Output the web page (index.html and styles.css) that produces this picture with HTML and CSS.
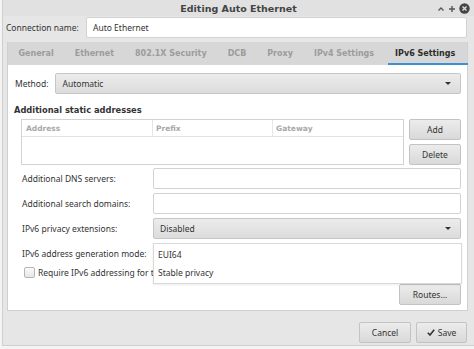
FILE: index.html
```html
<!DOCTYPE html>
<html lang="en">
<head>
    <meta charset="UTF-8">
    <meta name="viewport" content="width=device-width, initial-scale=1.0">
    <title>Editing Auto Ethernet</title>
    <link rel="stylesheet" href="styles.css">
</head>
<body>
<div class="window">
  <div class="titlebar">
    <span class="title">Editing Auto Ethernet</span>
    <div class="wm-buttons">
      <svg width="8" height="8" viewBox="0 0 8 8"><path d="M1.5 5.5 L4 3 L6.5 5.5" fill="none" stroke="#555" stroke-width="1.3"/></svg>
      <svg width="8" height="8" viewBox="0 0 8 8"><path d="M4 1 V7 M1 4 H7" stroke="#555" stroke-width="1.4"/></svg>
      <svg width="11" height="11" viewBox="0 0 11 11"><circle cx="5.5" cy="5.5" r="5.2" fill="#444"/><path d="M3.5 3.5 L7.5 7.5 M7.5 3.5 L3.5 7.5" stroke="#ddd" stroke-width="1.4"/></svg>
    </div>
  </div>

  <div class="conn-row">
    <label class="conn-label">Connection name:</label>
    <div class="entry conn-entry">Auto Ethernet</div>
  </div>

  <div class="notebook">
    <ul class="tabs">
      <li>General</li>
      <li>Ethernet</li>
      <li>802.1X Security</li>
      <li>DCB</li>
      <li>Proxy</li>
      <li>IPv4 Settings</li>
      <li class="active">IPv6 Settings</li>
    </ul>

    <div class="page">
      <div class="method-row">
        <span class="label">Method:</span>
        <div class="combo method-combo">Automatic<span class="arrow"></span></div>
      </div>

      <h3 class="section">Additional static addresses</h3>

      <div class="addr-row">
        <div class="addr-table">
          <div class="addr-head">
            <span>Address</span>
            <span>Prefix</span>
            <span>Gateway</span>
          </div>
        </div>
        <div class="addr-buttons">
          <button class="btn">Add</button>
          <button class="btn">Delete</button>
        </div>
      </div>

      <div class="form">
        <span class="label">Additional DNS servers:</span>
        <div class="entry"></div>
        <span class="label">Additional search domains:</span>
        <div class="entry"></div>
        <span class="label">IPv6 privacy extensions:</span>
        <div class="combo">Disabled<span class="arrow"></span></div>
        <span class="label">IPv6 address generation mode:</span>
        <div class="combo-wrap">
          <div class="combo">EUI64<span class="arrow"></span></div>
          <ul class="popup">
            <li>EUI64</li>
            <li>Stable privacy</li>
          </ul>
        </div>
      </div>

      <label class="check-row">
        <span class="checkbox"></span>
        <span class="check-text">Require IPv6 addressing for this connection to complete</span>
      </label>

      <div class="routes-row">
        <button class="btn routes">Routes…</button>
      </div>
    </div>
  </div>

  <div class="footer">
    <button class="btn">Cancel</button>
    <button class="btn save"><svg width="8" height="7" viewBox="0 0 8 7"><path d="M0.8 3.8 L3 6 L7.2 0.8" fill="none" stroke="#333" stroke-width="1.6"/></svg>Save</button>
  </div>
</div>
</body>
</html>
```

FILE: styles.css
```css
:root {
    --clr-window: #e6e6e6;
    --clr-tabs: #d7d7d7;
    --clr-border: #c9c9c9;
    --clr-text: #333;
    --clr-accent: #3d8fd1;
}

* {
    box-sizing: border-box;
}

body {
    margin: 0;
    font-family: "Noto Sans", sans-serif;
    font-size: 8.5px;
    color: var(--clr-text);
    background: #f4f4f4;
}

.window {
    width: 472px;
    height: 346px;
    margin-left: 2px;
    background: var(--clr-window);
    border-left: 1px solid #cfcfcf;
    border-bottom: 1px solid #cfcfcf;
    display: flex;
    flex-direction: column;
}

.label {
    white-space: nowrap;
}

/* title bar */

.titlebar {
    position: relative;
    height: 16px;
    display: flex;
    align-items: center;
    justify-content: center;
    background: #e1e1e1;
}

.title {
    font-family: "DejaVu Sans", sans-serif;
    font-weight: bold;
    font-size: 9.5px;
    color: #444;
}

.wm-buttons {
    position: absolute;
    right: 4px;
    top: 3px;
    display: flex;
    align-items: center;
    gap: 3px;
}

/* connection name */

.conn-row {
    display: flex;
    align-items: center;
    gap: 6px;
    padding: 1px 7px 0 3px;
    height: 22px;
}

.conn-label {
    width: 74px;
    flex-shrink: 0;
    white-space: nowrap;
}

.entry {
    height: 21px;
    background: #fff;
    border: 1px solid #d2d2d2;
    border-radius: 2px;
    padding: 0 6px;
    display: flex;
    align-items: center;
}

.conn-entry {
    flex: 1;
}

/* notebook */

.notebook {
    margin: 4px 6px 0 4px;
    border: 1px solid #d0d0d0;
    border-top: none;
}

.tabs {
    margin: 0;
    padding: 0;
    list-style: none;
    display: flex;
    background: var(--clr-tabs);
    height: 23px;
}

.tabs li {
    position: relative;
    flex-shrink: 0;
    white-space: nowrap;
    font-family: "DejaVu Sans", sans-serif;
    font-weight: bold;
    font-size: 8px;
    color: #9c9c9c;
    padding: 0 10.5px;
    display: flex;
    align-items: center;
}

.tabs li.active {
    color: #2d2d2d;
}

.tabs li.active::after {
    content: "";
    position: absolute;
    left: 3px;
    right: -2px;
    bottom: 0;
    height: 2px;
    background: var(--clr-accent);
}

.page {
    background: #fff;
    height: 245px;
    padding: 8px 6px 0 7px;
    display: flex;
    flex-direction: column;
}

.method-row {
    display: flex;
    align-items: center;
    gap: 7px;
}

.combo {
    position: relative;
    height: 21px;
    border: 1px solid #c6c6c6;
    border-radius: 2px;
    background: linear-gradient(#ececec, #dcdcdc);
    display: flex;
    align-items: center;
    padding: 0 6px;
}

.method-combo {
    flex: 1;
}

.arrow {
    position: absolute;
    right: 9px;
    top: 8px;
    border-left: 3px solid transparent;
    border-right: 3px solid transparent;
    border-top: 3.5px solid #333;
}

.section {
    margin: 11px 0 4px -1px;
    font-family: "DejaVu Sans", sans-serif;
    font-size: 8.3px;
    font-weight: bold;
}

.addr-row {
    display: flex;
    gap: 5px;
    padding-left: 6px;
}

.addr-table {
    flex: 1;
    height: 46px;
    border: 1px solid #d2d2d2;
}

.addr-head {
    display: grid;
    grid-template-columns: 130px 120px 1fr;
    height: 17px;
    border-bottom: 1px solid #e2e2e2;
}

.addr-head span {
    font-family: "DejaVu Sans", sans-serif;
    font-weight: bold;
    font-size: 7.5px;
    color: #a8a8a8;
    padding-left: 3px;
    display: flex;
    align-items: center;
    border-left: 1px solid #e6e6e6;
}

.addr-head span:first-child {
    border-left: none;
    padding-left: 4px;
}

.addr-buttons {
    display: flex;
    flex-direction: column;
    gap: 4px;
}

.btn {
    font: inherit;
    color: var(--clr-text);
    height: 21px;
    width: 52px;
    border: 1px solid #c3c3c3;
    border-radius: 2px;
    background: linear-gradient(#ececec, #d9d9d9);
    padding: 0;
    display: flex;
    align-items: center;
    justify-content: center;
    gap: 3px;
}

.form {
    display: grid;
    grid-template-columns: 131px 1fr;
    row-gap: 4px;
    align-items: center;
    margin-top: 3px;
    padding-left: 7px;
}

.combo-wrap {
    position: relative;
}

.popup {
    position: absolute;
    left: 0;
    right: -1px;
    top: 0;
    margin: 0;
    padding: 1px 0 2px;
    list-style: none;
    background: #fff;
    border: 1px solid #d8d8d8;
    box-shadow: 0 1px 2px rgba(0, 0, 0, 0.08);
}

.popup li {
    height: 18px;
    padding: 0 4px;
    display: flex;
    align-items: center;
}

.check-row {
    display: flex;
    align-items: center;
    gap: 3px;
    margin: 3px 0 0 9px;
    white-space: nowrap;
}

.checkbox {
    width: 11px;
    height: 11px;
    border: 1px solid #b5b5b5;
    border-radius: 2px;
    background: linear-gradient(#fafafa, #e6e6e6);
}

.routes-row {
    display: flex;
    justify-content: flex-end;
    margin-top: 6px;
}

.routes {
    width: 62px;
}

/* dialog buttons */

.footer {
    display: flex;
    justify-content: flex-end;
    gap: 5px;
    padding: 11px 7px 0 0;
}

.save {
    width: 51px;
}
```
